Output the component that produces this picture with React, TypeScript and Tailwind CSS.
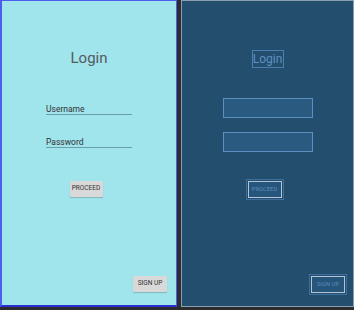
import React from 'react';

const font = { fontFamily: 'Roboto, "Liberation Sans", sans-serif' };

const LightScreen: React.FC = () => (
  <div className="flex h-[307px] w-[177px] flex-col border border-l-2 border-b-2 border-[#4c5ef0] border-b-[#2a2fd0] bg-[#a0e4ec]">
    {/* Title */}
    <div className="mt-[47px] text-center text-[15px] leading-[20px] text-[#555a5c]">Login</div>

    {/* Fields */}
    <div className="mt-[37px] flex flex-col items-center gap-[23px]">
      <div className="w-[86px] border-b border-[#6a9ea8] text-[8.5px] leading-[9px] text-[#333]">Username</div>
      <div className="w-[86px] border-b border-[#6a9ea8] text-[8.5px] leading-[9px] text-[#333]">Password</div>
    </div>

    {/* Proceed */}
    <div className="mt-[33px] flex justify-center pr-[6px]">
      <button className="h-[16px] w-[33px] rounded-[1px] bg-[#d9d9d9] text-[6.5px] text-[#333] shadow-[0_1px_1px_rgba(0,0,0,0.2)]">
        PROCEED
      </button>
    </div>

    {/* Sign up */}
    <div className="mt-auto mb-[13px] flex justify-end pr-[9px]">
      <button className="h-[16px] w-[34px] rounded-[1px] bg-[#d9d9d9] text-[6.5px] text-[#333] shadow-[0_1px_1px_rgba(0,0,0,0.2)]">
        SIGN UP
      </button>
    </div>
  </div>
);

const DarkButton: React.FC<{ label: string; w: string }> = ({ label, w }) => (
  <div className={`border border-[#3d6f9e] p-[1px] ${w}`}>
    <div className="flex h-[17px] items-center justify-center border border-[#b4c5d8] bg-[#27567c] text-[5.5px] tracking-[0.2px] text-[#5d8cbc]">
      {label}
    </div>
  </div>
);

const DarkScreen: React.FC = () => (
  <div className="flex h-[307px] w-[173px] flex-col border border-[#8c9fb2] bg-[#234e6e]">
    {/* Title */}
    <div className="mt-[49px] flex justify-center">
      <div className="flex h-[18px] w-[32px] items-center justify-center border border-[#4b7fb0] text-[12px] leading-[14px] text-[#5e90c2]">
        Login
      </div>
    </div>

    {/* Inputs */}
    <div className="mt-[30px] flex flex-col items-center gap-[14px]">
      <div className="h-[20px] w-[90px] border border-[#5d8fc0] bg-[#2a5a80]" />
      <div className="h-[20px] w-[90px] border border-[#5d8fc0] bg-[#2a5a80]" />
    </div>

    {/* Proceed */}
    <div className="mt-[27px] flex justify-center pr-[6px]">
      <DarkButton label="PROCEED" w="w-[38px]" />
    </div>

    {/* Sign up */}
    <div className="mt-auto mb-[11px] flex justify-end pr-[6px]">
      <DarkButton label="SIGN UP" w="w-[38px]" />
    </div>
  </div>
);

export default function App() {
  return (
    <div className="flex h-[310px] w-[354px] gap-[4px] bg-[#2c2c2e]" style={font}>
      <LightScreen />
      <DarkScreen />
    </div>
  );
}
